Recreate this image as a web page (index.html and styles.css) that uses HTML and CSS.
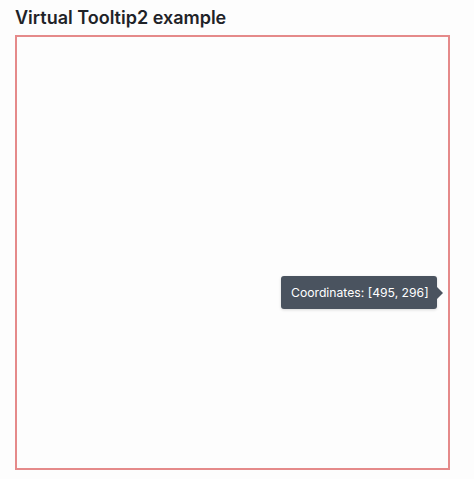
FILE: index.html
```html
<!DOCTYPE html>
<html lang="en">
<head>
<meta charset="UTF-8">
<meta name="viewport" content="width=device-width, initial-scale=1.0">
<title>Virtual Tooltip2 example</title>
<link rel="stylesheet" href="styles.css">
</head>
<body>

<div class="page">
    <h2 class="title">Virtual Tooltip2 example</h2>
    <div class="area">
        <div class="tooltip">
            Coordinates: [495, 296]
            <span class="tooltip-arrow"></span>
        </div>
    </div>
</div>

</body>
</html>
```

FILE: styles.css
```css
body {
    margin: 0;
    background: #fdfdfd;
    font-family: Inter, "Noto Sans", sans-serif;
    color: #1f2328;
}

.page {
    padding: 7px 15px;
}

.title {
    margin: 0 0 6px 0;
    font-size: 18px;
    font-weight: 600;
    line-height: 22px;
}

.area {
    position: relative;
    width: 431px;
    height: 431px;
    border: 2px solid #e58a8a;
    background: #fdfdfd;
}

.tooltip {
    position: absolute;
    left: 264px;
    top: 239px;
    width: 156px;
    height: 33px;
    box-sizing: border-box;
    padding: 0 10px;
    line-height: 33px;
    background: #4a535f;
    color: #fff;
    font-size: 12.2px;
    border-radius: 3px;
    box-shadow: 0 1px 3px rgba(0, 0, 0, 0.15);
    white-space: nowrap;
}

.tooltip-arrow {
    position: absolute;
    right: -6px;
    top: 11px;
    width: 0;
    height: 0;
    border-top: 6px solid transparent;
    border-bottom: 6px solid transparent;
    border-left: 6px solid #4a535f;
}
```
